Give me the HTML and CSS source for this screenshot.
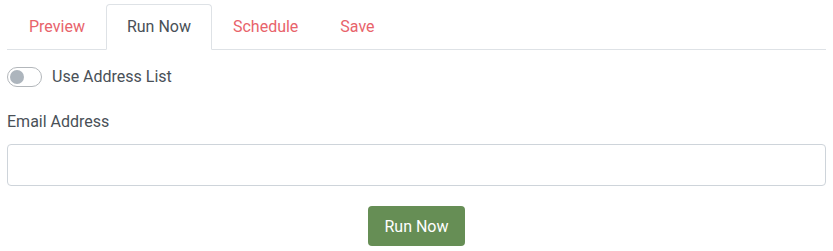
FILE: index.html
```html
<!DOCTYPE html>
<html lang="en">
<head>
    <meta charset="UTF-8">
    <meta name="viewport" content="width=device-width, initial-scale=1.0">
    <title>Run Now</title>
    <link rel="stylesheet" href="styles.css">
</head>
<body>
    <div class="page">
        <ul class="tabs">
            <li><a class="tab" href="#">Preview</a></li>
            <li><a class="tab active" href="#">Run Now</a></li>
            <li><a class="tab" href="#">Schedule</a></li>
            <li><a class="tab" href="#">Save</a></li>
        </ul>
        <div class="pane">
            <label class="toggle">
                <input type="checkbox">
                <span class="track"></span>
                <span class="toggle-label">Use Address List</span>
            </label>
            <div class="field">
                <label class="field-label" for="email">Email Address</label>
                <input id="email" class="input" type="text">
            </div>
            <div class="actions">
                <button class="btn">Run Now</button>
            </div>
        </div>
    </div>
</body>
</html>
```

FILE: styles.css
```css
body{
    margin: 0;
    background-color: #fff;
    font-family: Roboto, "Liberation Sans", sans-serif;
    font-size: 16px;
    color: #495057;
}
.page{
    padding: 4px 7px 0 7px;
}
.tabs{
    display: flex;
    list-style: none;
    margin: 0;
    padding: 0 0 0 1px;
    border-bottom: 1px solid #dee2e6;
}
.tabs li{
    margin-bottom: -1px;
}
.tab{
    display: block;
    padding: 10px 20px;
    line-height: 24px;
    color: #e8636b;
    text-decoration: none;
    border: 1px solid transparent;
    border-top-left-radius: 4px;
    border-top-right-radius: 4px;
}
.tab.active{
    color: #495057;
    background-color: #fff;
    border-color: #dee2e6 #dee2e6 #fff;
}
.pane{
    padding-top: 17px;
}
.toggle{
    display: flex;
    align-items: center;
    cursor: pointer;
}
.toggle input{
    opacity: 0;
    width: 0;
    height: 0;
    margin: 0;
}
.track{
    position: relative;
    width: 33px;
    height: 18px;
    border: 1px solid #b3b7bb;
    border-radius: 10px;
    background-color: #fff;
}
.track:before{
    position: absolute;
    content: "";
    width: 14px;
    height: 14px;
    left: 2px;
    top: 2px;
    border-radius: 50%;
    background-color: #adb5bd;
}
.toggle-label{
    margin-left: 10px;
    line-height: 20px;
}
.field{
    margin-top: 23px;
}
.field-label{
    display: block;
    line-height: 24px;
    margin-bottom: 10px;
}
.input{
    display: block;
    box-sizing: border-box;
    width: 100%;
    height: 42px;
    padding: 6px 12px;
    font-family: inherit;
    font-size: 16px;
    border: 1px solid #ced4da;
    border-radius: 4px;
    outline: none;
}
.actions{
    display: flex;
    justify-content: center;
    margin-top: 20px;
}
.btn{
    width: 97px;
    height: 40px;
    padding: 0;
    font-family: inherit;
    font-size: 16px;
    color: #fff;
    background-color: #668e55;
    border: none;
    border-radius: 4px;
    cursor: pointer;
}
```
